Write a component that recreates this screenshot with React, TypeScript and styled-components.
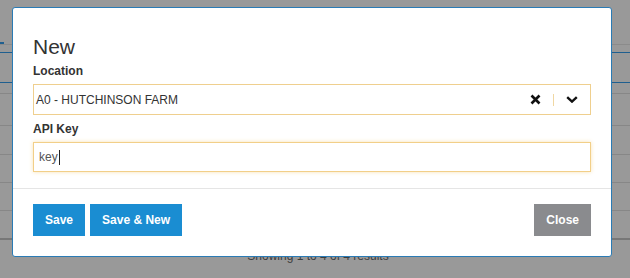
import React from 'react';
import styled, { createGlobalStyle } from 'styled-components';

const GlobalStyle = createGlobalStyle`
  html, body {
    margin: 0;
    padding: 0;
    background: #999999;
    font-family: "Liberation Sans", Arial, sans-serif;
  }
`;

const Page = styled.div`
  width: 630px;
  height: 278px;
  overflow: hidden;
  background: #999999;
`;

const TabBar = styled.div`
  display: flex;
  height: 44px;
  border-bottom: 1px solid #8b8b8b;
`;

const ActiveTab = styled.div`
  width: 4px;
  height: 42px;
  border-bottom: 2px solid #1f5f8f;
`;

const Table = styled.div`
  margin-top: 7px;
`;

const HeadRow = styled.div`
  height: 29px;
  border-top: 1px solid #1f5f8f;
  border-bottom: 1px solid #1f5f8f;
`;

const Row = styled.div<{ $h: number; $last?: boolean }>`
  height: ${({ $h }) => $h}px;
  border-bottom: ${({ $last }) => ($last ? '2px solid #777777' : '1px solid #878787')};
`;

const Results = styled.div`
  margin-top: 8px;
  padding-left: 6px;
  text-align: center;
  font-size: 12px;
  line-height: 17px;
  color: #3d3d3d;
`;

const Overlay = styled.div`
  position: fixed;
  inset: 0;
  display: flex;
  align-items: flex-start;
`;

const Dialog = styled.div`
  margin: 7px 0 0 12px;
  width: 598px;
  background: #ffffff;
  border: 1px solid #2a7bb5;
  border-radius: 3px;
  color: #333333;
`;

const Body = styled.div`
  padding: 27px 20px 16px;
  display: flex;
  flex-direction: column;
`;

const Title = styled.h4`
  margin: 0 0 5px;
  font-size: 21px;
  line-height: 23px;
  font-weight: normal;
  color: #333333;
`;

const Label = styled.label<{ $gap?: number }>`
  display: block;
  margin: ${({ $gap }) => $gap ?? 0}px 0 5px;
  font-size: 12px;
  line-height: 16px;
  font-weight: bold;
  color: #333333;
`;

const Select = styled.div`
  display: flex;
  align-items: center;
  height: 29px;
  border: 1px solid #efcf8e;
  padding-left: 2px;
`;

const SelectValue = styled.span`
  flex: 1;
  font-size: 12px;
  color: #333333;
`;

const Indicator = styled.span`
  display: flex;
  align-items: center;
  justify-content: center;
  width: 36px;
  height: 100%;
`;

const Sep = styled.span`
  width: 1px;
  height: 12px;
  background: #f0d7a2;
`;

const Field = styled.div`
  display: flex;
  align-items: center;
  height: 28px;
  border: 1px solid #f2cf88;
  box-shadow: 0 0 4px rgba(240, 190, 90, 0.45);
  padding-left: 5px;
  font-size: 12px;
  color: #555555;
`;

const Caret = styled.span`
  width: 1px;
  height: 15px;
  margin-left: 1px;
  background: #222222;
`;

const Footer = styled.div`
  display: flex;
  gap: 5px;
  padding: 15px 20px 20px;
  border-top: 1px solid #e5e5e5;
`;

const Button = styled.button<{ $gray?: boolean }>`
  height: 32px;
  padding: 0 12px;
  border: none;
  border-radius: 0;
  background: ${({ $gray }) => ($gray ? '#8a8b8e' : '#1a8dd2')};
  color: #ffffff;
  font-family: "Liberation Sans", Arial, sans-serif;
  font-size: 12px;
  font-weight: bold;
  margin-left: ${({ $gray }) => ($gray ? 'auto' : '0')};
`;

const rows = [31, 28, 27, 27, 27];

export default function App() {
  return (
    <>
      <GlobalStyle />
      <Page>
        <TabBar>
          <ActiveTab />
        </TabBar>
        <Table>
          <HeadRow />
          <Row $h={10} />
          {rows.map((h, i) => (
            <Row key={i} $h={h} $last={i === rows.length - 1} />
          ))}
        </Table>
        <Results>Showing 1 to 4 of 4 results</Results>
      </Page>
      <Overlay>
        <Dialog>
          <Body>
            <Title>New</Title>
            <Label>Location</Label>
            <Select>
              <SelectValue>A0 - HUTCHINSON FARM</SelectValue>
              <Indicator>
                <svg width="11" height="11" viewBox="0 0 11 11">
                  <path d="M1.5 1.5 L9.5 9.5 M9.5 1.5 L1.5 9.5" stroke="#111" strokeWidth="2.6" />
                </svg>
              </Indicator>
              <Sep />
              <Indicator>
                <svg width="12" height="7" viewBox="0 0 12 7">
                  <path d="M1.2 1.2 L6 5.6 L10.8 1.2" stroke="#111" strokeWidth="2.4" fill="none" />
                </svg>
              </Indicator>
            </Select>
            <Label $gap={6}>API Key</Label>
            <Field>
              key
              <Caret />
            </Field>
          </Body>
          <Footer>
            <Button>Save</Button>
            <Button>Save &amp; New</Button>
            <Button $gray>Close</Button>
          </Footer>
        </Dialog>
      </Overlay>
    </>
  );
}
